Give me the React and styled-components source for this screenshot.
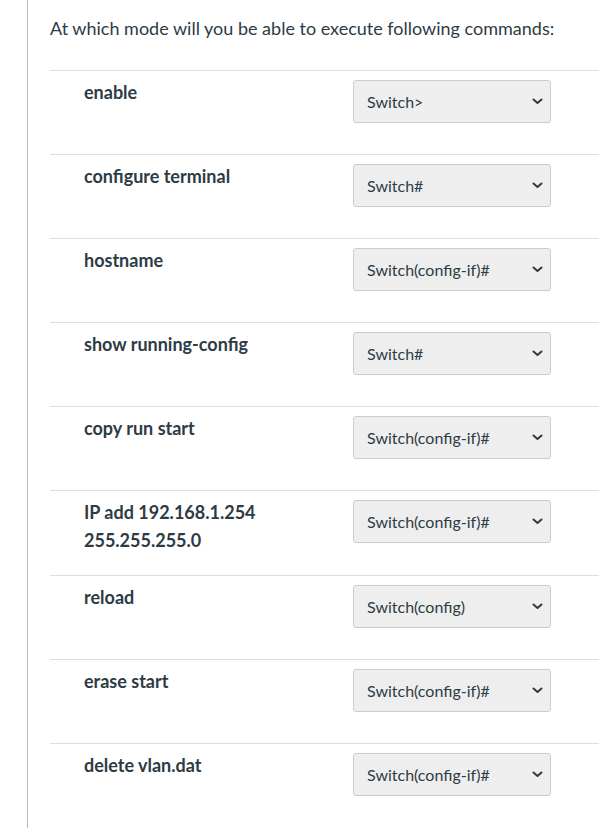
import React from 'react';
import styled, { createGlobalStyle } from 'styled-components';

const GlobalStyle = createGlobalStyle`
  body {
    margin: 0;
    background: #fff;
    font-family: Lato, "Noto Sans", sans-serif;
    color: #2d3b45;
  }
`;

const items = [
  { cmd: 'enable', mode: 'Switch>' },
  { cmd: 'configure terminal', mode: 'Switch#' },
  { cmd: 'hostname', mode: 'Switch(config-if)#' },
  { cmd: 'show running-config', mode: 'Switch#' },
  { cmd: 'copy run start', mode: 'Switch(config-if)#' },
  { cmd: 'IP add 192.168.1.254 255.255.255.0', mode: 'Switch(config-if)#' },
  { cmd: 'reload', mode: 'Switch(config)' },
  { cmd: 'erase start', mode: 'Switch(config-if)#' },
  { cmd: 'delete vlan.dat', mode: 'Switch(config-if)#' },
];

const Chevron = () => (
  <svg width="11" height="7" viewBox="0 0 11 7">
    <path d="M1.5 1.5 L5.5 5 L9.5 1.5" fill="none" stroke="#2d3b45" strokeWidth="2" strokeLinecap="round" strokeLinejoin="round" />
  </svg>
);

const App = () => {
  return (
    <>
      <GlobalStyle />
      <Page>
        <Question>
          <Prompt>At which mode will you be able to execute following commands:</Prompt>
          <List>
            {items.map((item) => (
              <Row key={item.cmd}>
                <Command>{item.cmd}</Command>
                <Select>
                  <span>{item.mode}</span>
                  <Chevron />
                </Select>
              </Row>
            ))}
          </List>
        </Question>
      </Page>
    </>
  );
};

export default App;

const Page = styled.div`
  min-height: 828px;
  padding-left: 27px;
  box-sizing: border-box;
`;

const Question = styled.div`
  border-left: 1px solid #b4b8bc;
  min-height: 828px;
  padding-left: 22px;
  padding-top: 14px;
  box-sizing: border-box;
`;

const Prompt = styled.div`
  font-size: 18px;
  line-height: 28px;
  margin-bottom: 28px;
`;

const List = styled.div`
  display: flex;
  flex-direction: column;
`;

const Row = styled.div`
  display: grid;
  grid-template-columns: 269px 198px;
  align-items: start;
  border-top: 1px solid #dcdfe2;
  padding-left: 34px;
`;

const Command = styled.div`
  font-weight: 700;
  font-size: 18px;
  line-height: 28px;
  padding: 7px 20px 21px 0;
`;

const Select = styled.div`
  box-sizing: border-box;
  height: 43px;
  margin: 9px 0 31px;
  padding: 0 7px 0 13px;
  background: #eeeeee;
  border: 1px solid #c7cdd1;
  border-radius: 3px;
  display: flex;
  align-items: center;
  justify-content: space-between;
  font-size: 16px;
`;
